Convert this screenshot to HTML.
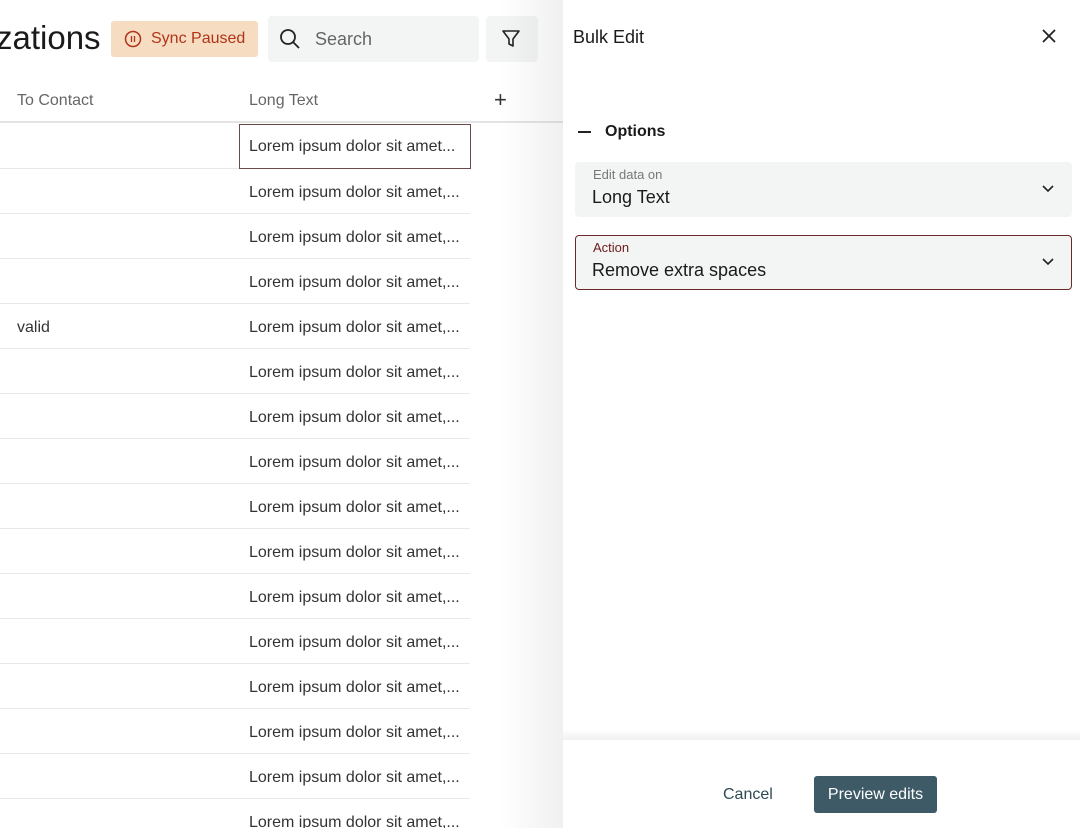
<!DOCTYPE html>
<html><head><style>
*{margin:0;padding:0;box-sizing:border-box}
html,body{width:1080px;height:828px;overflow:hidden}
body{background:#fff;font-family:"Liberation Sans",sans-serif;position:relative;color:#222}
.a{position:absolute}
.row{position:absolute;left:0;width:470px;height:45px;border-bottom:1px solid #e8e8e8}
.row span{position:absolute;left:249px;top:15px;font-size:16px;color:#333;white-space:nowrap}
</style></head><body>
<div class="a" style="left:-4px;top:19px;font-size:33px;color:#1a1a1a">zations</div>
<div class="a" style="left:111px;top:21px;width:147px;height:36px;background:#f6dcc0;border-radius:3px"></div>
<svg class="a" style="left:124px;top:30px" width="18" height="18" viewBox="0 0 18 18"><circle cx="9" cy="9" r="7.5" fill="none" stroke="#b0341a" stroke-width="1.5"/><path d="M7.5 6v6M10.5 6v6" stroke="#b0341a" stroke-width="1.3"/></svg>
<div class="a" style="left:151px;top:30px;font-size:16px;color:#b0341a">Sync Paused</div>
<div class="a" style="left:268px;top:16px;width:211px;height:46px;background:#f3f4f4;border-radius:4px"></div>
<svg class="a" style="left:279px;top:28px" width="22" height="22" viewBox="0 0 22 22"><circle cx="9" cy="9" r="7" fill="none" stroke="#222" stroke-width="1.8"/><path d="M14 14l6 6" stroke="#222" stroke-width="1.8"/></svg>
<div class="a" style="left:315px;top:29px;font-size:18px;color:#666">Search</div>
<div class="a" style="left:486px;top:16px;width:52px;height:46px;background:#f3f4f4;border-radius:4px"></div>
<svg class="a" style="left:501px;top:30px" width="20" height="18" viewBox="0 0 20 18"><path d="M2 1h16l-6 8v7l-4-2V9z" fill="none" stroke="#222" stroke-width="1.6" stroke-linejoin="round"/></svg>
<div class="a" style="left:17px;top:92px;font-size:16px;color:#666">To Contact</div>
<div class="a" style="left:249px;top:92px;font-size:16px;color:#666">Long Text</div>
<div class="a" style="left:494px;top:87px;font-size:22px;color:#333">+</div>
<div class="a" style="left:0;top:121px;width:563px;height:2px;background:#e4e4e6"></div>
<div class="row" style="top:124px"></div>
<div class="a" style="left:239px;top:124px;width:232px;height:45px;border:1px solid #6b4a4a;background:#fff"></div>
<div class="a" style="left:249px;top:138px;font-size:16px;color:#333">Lorem ipsum dolor sit amet...</div>
<div class="row" style="top:169px"><span>Lorem ipsum dolor sit amet,...</span></div>
<div class="row" style="top:214px"><span>Lorem ipsum dolor sit amet,...</span></div>
<div class="row" style="top:259px"><span>Lorem ipsum dolor sit amet,...</span></div>
<div class="row" style="top:304px"><span>Lorem ipsum dolor sit amet,...</span><b style="position:absolute;left:17px;top:15px;font-weight:normal;font-size:16px;color:#333">valid</b></div>
<div class="row" style="top:349px"><span>Lorem ipsum dolor sit amet,...</span></div>
<div class="row" style="top:394px"><span>Lorem ipsum dolor sit amet,...</span></div>
<div class="row" style="top:439px"><span>Lorem ipsum dolor sit amet,...</span></div>
<div class="row" style="top:484px"><span>Lorem ipsum dolor sit amet,...</span></div>
<div class="row" style="top:529px"><span>Lorem ipsum dolor sit amet,...</span></div>
<div class="row" style="top:574px"><span>Lorem ipsum dolor sit amet,...</span></div>
<div class="row" style="top:619px"><span>Lorem ipsum dolor sit amet,...</span></div>
<div class="row" style="top:664px"><span>Lorem ipsum dolor sit amet,...</span></div>
<div class="row" style="top:709px"><span>Lorem ipsum dolor sit amet,...</span></div>
<div class="row" style="top:754px"><span>Lorem ipsum dolor sit amet,...</span></div>
<div class="row" style="top:799px"><span>Lorem ipsum dolor sit amet,...</span></div>
<div class="a" style="left:500px;top:0;width:63px;height:828px;background:linear-gradient(90deg,rgba(0,0,0,0),rgba(0,0,0,0.06))"></div>
<div class="a" style="left:563px;top:0;width:517px;height:828px;background:#fff">
<div class="a" style="left:10px;top:27px;font-size:18px;color:#1a1a1a">Bulk Edit</div>
<svg class="a" style="left:478px;top:28px" width="16" height="16" viewBox="0 0 16 16"><path d="M2 2l12 12M14 2L2 14" stroke="#222" stroke-width="1.8"/></svg>
<div class="a" style="left:15px;top:131px;width:13px;height:2px;background:#222"></div>
<div class="a" style="left:42px;top:123px;font-size:16px;font-weight:bold;color:#1a1a1a">Options</div>
<div class="a" style="left:12px;top:162px;width:497px;height:55px;background:#f3f5f4;border-radius:4px"></div>
<div class="a" style="left:30px;top:167px;font-size:13px;color:#777">Edit data on</div>
<div class="a" style="left:29px;top:187px;font-size:18px;color:#1a1a1a">Long Text</div>
<svg class="a" style="left:478px;top:184px" width="14" height="10" viewBox="0 0 14 10"><path d="M2 2l5 5 5-5" fill="none" stroke="#222" stroke-width="1.6"/></svg>
<div class="a" style="left:12px;top:235px;width:497px;height:55px;background:#f3f5f4;border:1px solid #6b2a2a;border-radius:4px"></div>
<div class="a" style="left:30px;top:240px;font-size:13px;color:#6b1a1a">Action</div>
<div class="a" style="left:29px;top:260px;font-size:18px;color:#1a1a1a">Remove extra spaces</div>
<svg class="a" style="left:478px;top:257px" width="14" height="10" viewBox="0 0 14 10"><path d="M2 2l5 5 5-5" fill="none" stroke="#222" stroke-width="1.6"/></svg>
<div class="a" style="left:0;top:730px;width:517px;height:10px;background:linear-gradient(180deg,#fff,#f0f0f0)"></div>
<div class="a" style="left:160px;top:786px;font-size:16px;color:#2e4a56">Cancel</div>
<div class="a" style="left:251px;top:776px;width:123px;height:37px;background:#3d5a66;border-radius:3px;color:#fff;font-size:16px;text-align:center;line-height:37px">Preview edits</div>
</div>
</body></html>
